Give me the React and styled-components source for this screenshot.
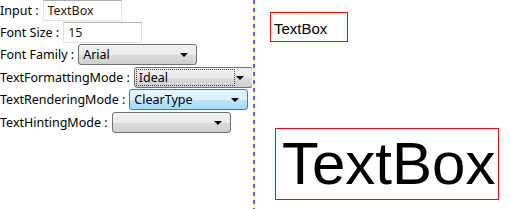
import React from "react";
import styled, { createGlobalStyle } from "styled-components";

const GlobalStyle = createGlobalStyle`
  html, body {
    margin: 0;
    padding: 0;
    background: #fff;
  }
  body {
    font-family: "Noto Sans", "Liberation Sans", sans-serif;
  }
`;

const Page = styled.div`
  display: flex;
  width: 511px;
  height: 209px;
  overflow: hidden;
  background: #fff;
`;

const LeftPanel = styled.div`
  width: 252px;
  flex: none;
  overflow: hidden;
  display: flex;
  flex-direction: column;
  gap: 1px;
`;

const Row = styled.div`
  display: flex;
  align-items: center;
  height: ${(p) => p.h || 21}px;
  white-space: nowrap;
`;

const Label = styled.span`
  font-size: 12.5px;
  color: #000;
  margin-right: 4px;
`;

const TextInput = styled.div`
  box-sizing: border-box;
  width: 79px;
  height: 21px;
  border: 1px solid #dfe3e8;
  border-top-color: #abadb3;
  padding: 0 4px;
  display: flex;
  align-items: center;
  font-size: 12.5px;
  color: #2a1a0c;
  flex: none;
`;

const Combo = styled.div`
  box-sizing: border-box;
  position: relative;
  flex: none;
  width: ${(p) => p.w || 119}px;
  height: 21px;
  border: 1px solid ${(p) => (p.hover ? "#3c7fb1" : "#707070")};
  border-radius: 3px;
  background: ${(p) =>
    p.hover
      ? "linear-gradient(#eaf6fd 0%, #d9f0fc 50%, #bee6fd 51%, #a7d9f5 100%)"
      : "linear-gradient(#f2f2f2 0%, #ebebeb 50%, #dddddd 51%, #cfcfcf 100%)"};
  display: flex;
  align-items: center;
  padding-left: 4px;
  font-size: 12.5px;
  color: #000;
`;

const FocusBox = styled.span`
  position: absolute;
  left: 1px;
  top: 1px;
  width: 97px;
  height: 15px;
  border: 1px dotted #444;
  pointer-events: none;
`;

const Arrow = styled.span`
  position: absolute;
  right: 8px;
  top: 8px;
  width: 0;
  height: 0;
  border-left: 4px solid transparent;
  border-right: 4px solid transparent;
  border-top: 4px solid #000;
`;

const Divider = styled.div`
  width: 2px;
  flex: none;
  margin-left: 1px;
  background: repeating-linear-gradient(
    to bottom,
    #6060f0 0px,
    #6060f0 4px,
    #ffff88 4px,
    #ffff88 8px
  );
`;

const RightPanel = styled.div`
  flex: 1;
  display: flex;
  flex-direction: column;
  justify-content: space-between;
  padding: 12px 12px 9px 15px;
`;

const PreviewBox = styled.div`
  box-sizing: border-box;
  border: 1px solid #ff0000;
  width: ${(p) => p.w}px;
  height: ${(p) => p.h}px;
  padding: ${(p) => p.pad};
  font-family: "Liberation Sans", Arial, sans-serif;
  font-size: ${(p) => p.size}px;
  line-height: normal;
  color: #000;
  white-space: nowrap;
  overflow: hidden;
  align-self: ${(p) => p.align};
`;

export default function App() {
  return (
    <>
      <GlobalStyle />
      <Page>
        <LeftPanel>
          <Row>
            <Label>Input :</Label>
            <TextInput>TextBox</TextInput>
          </Row>
          <Row>
            <Label>Font Size :</Label>
            <TextInput>15</TextInput>
          </Row>
          <Row>
            <Label>Font Family :</Label>
            <Combo>
              Arial
              <Arrow />
            </Combo>
          </Row>
          <Row h={22}>
            <Label>TextFormattingMode :</Label>
            <Combo>
              Ideal
              <FocusBox />
              <Arrow />
            </Combo>
          </Row>
          <Row>
            <Label>TextRenderingMode :</Label>
            <Combo hover>
              ClearType
              <Arrow />
            </Combo>
          </Row>
          <Row h={22}>
            <Label>TextHintingMode :</Label>
            <Combo>
              <Arrow />
            </Combo>
          </Row>
        </LeftPanel>
        <Divider />
        <RightPanel>
          <PreviewBox w={78} h={30} size={15} pad="7px 3px 0" align="flex-start">
            TextBox
          </PreviewBox>
          <PreviewBox w={224} h={72} size={60} pad="0 0 0 6px" align="flex-end">
            TextBox
          </PreviewBox>
        </RightPanel>
      </Page>
    </>
  );
}
